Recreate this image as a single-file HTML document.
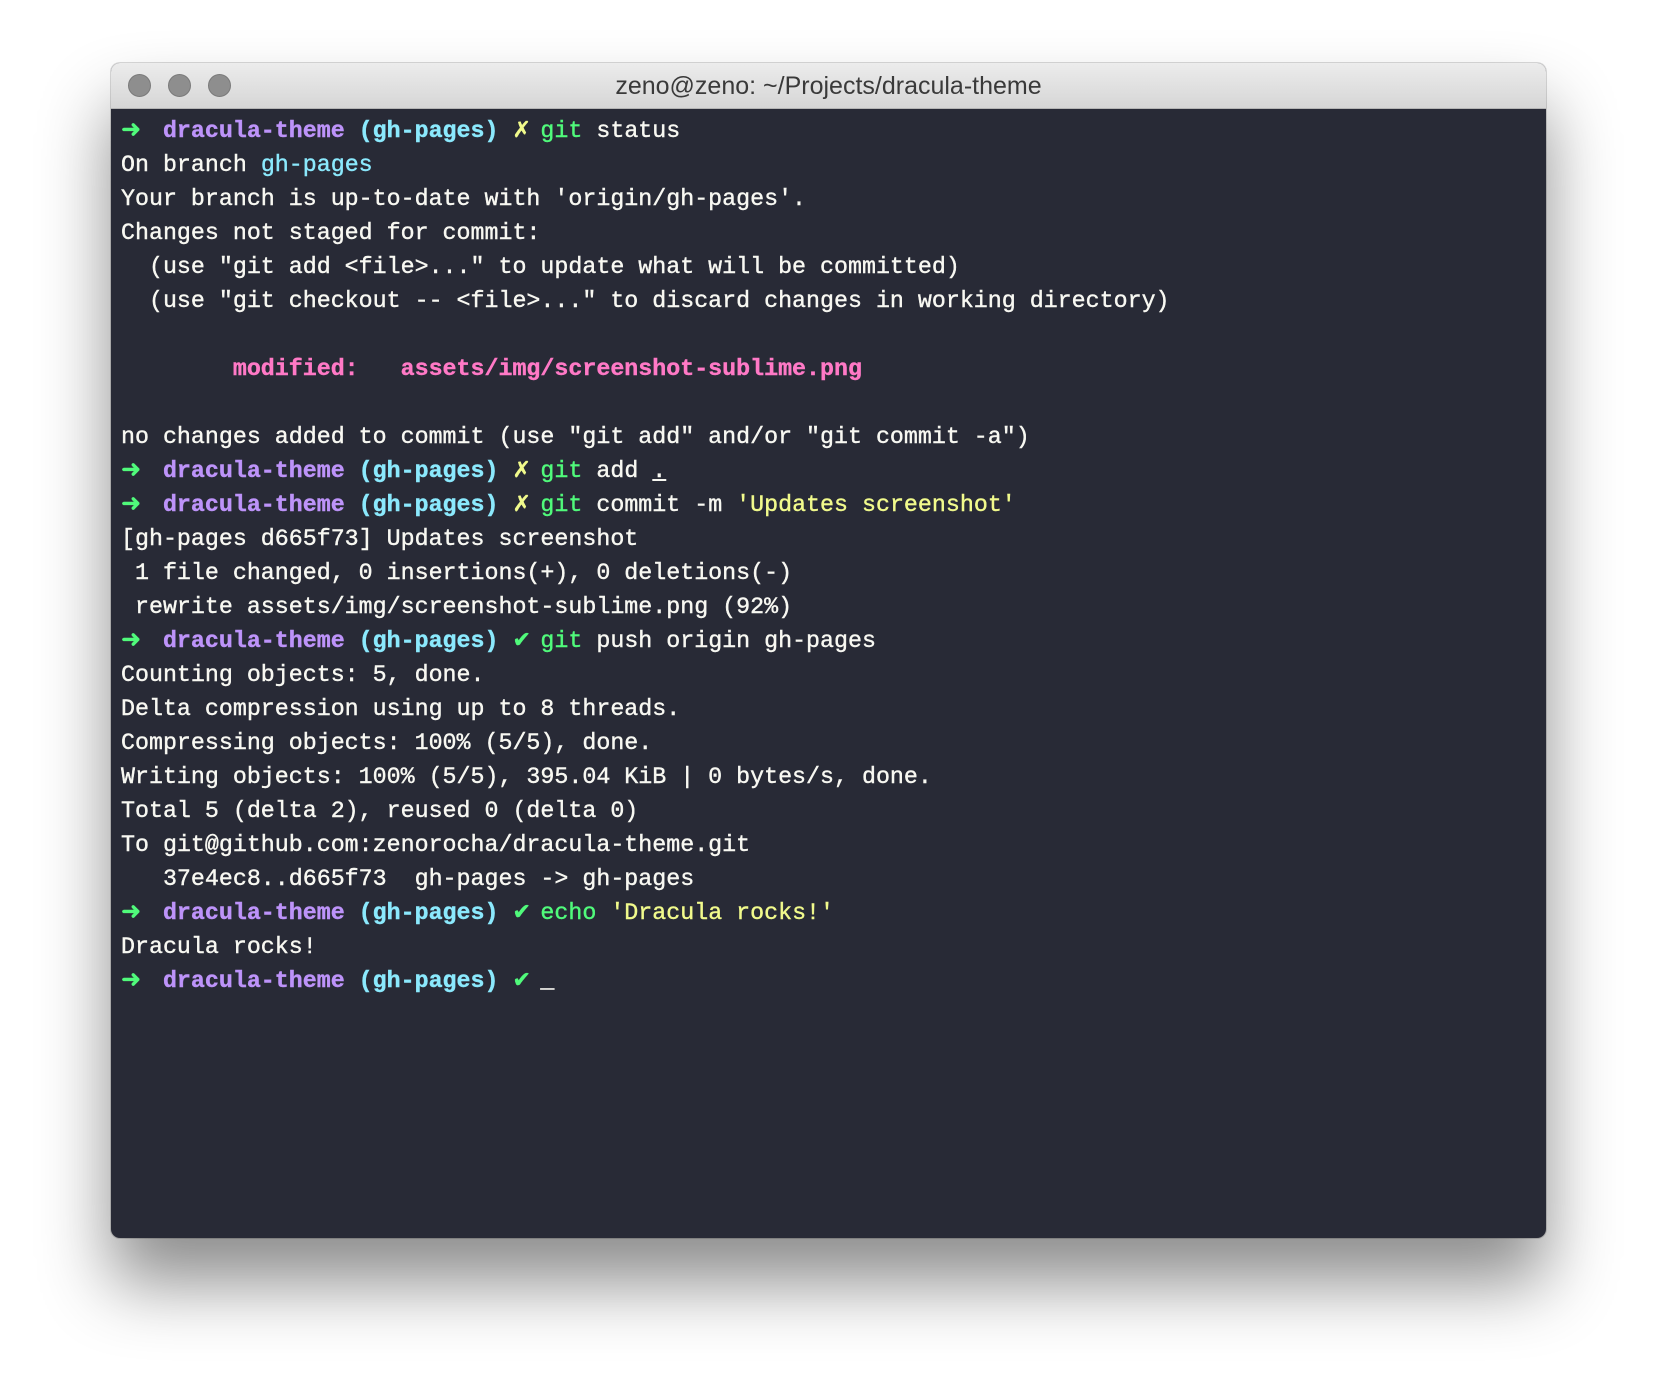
<!DOCTYPE html>
<html><head><meta charset="utf-8"><style>
html,body{margin:0;padding:0;background:#fff;width:1658px;height:1398px;overflow:hidden}
.win{position:absolute;left:111px;top:63px;width:1435px;height:1175px;border-radius:9px;background:#282a36;box-shadow:0 45px 70px rgba(0,0,0,.45),0 0 0 1px rgba(0,0,0,.15);overflow:hidden}
.tb{height:45px;background:linear-gradient(#ececec,#d6d6d6);border-bottom:1px solid #b5b5b5;position:relative;font-family:"Liberation Sans",sans-serif;font-size:25px;color:#3a3a3a;text-align:center;line-height:47px}
.dot{position:absolute;top:11px;width:23px;height:23px;border-radius:50%;background:#8e8e8e;border:1px solid #7a7a7a;box-sizing:border-box}
pre{margin:0;padding:5px 0 0 10px;font-family:"Liberation Mono",monospace;font-size:23.3px;line-height:34px;color:#f8f8f2;-webkit-text-stroke:0.4px currentColor}
.g{color:#50fa7b}.p{color:#bd93f9;font-weight:bold}.c{color:#8be9fd;font-weight:bold}.y{color:#f1fa8c}.k{color:#ff79c6;font-weight:bold}.cb{color:#8be9fd}
.ar,.sy{display:inline-block;width:1ch;overflow:visible;white-space:nowrap;text-align:left}
.ar>i,.sy>i{font-style:normal;font-family:"DejaVu Sans",sans-serif;font-weight:bold;font-size:24px;line-height:0}
.sy>i{font-size:22px}
</style></head><body>
<div class="win">
<div class="tb"><div class="dot" style="left:17px"></div><div class="dot" style="left:57px"></div><div class="dot" style="left:97px"></div>zeno@zeno: ~/Projects/dracula-theme</div>
<pre><span class="g ar"><i>➜</i></span>  <span class="p">dracula-theme</span> <span class="c">(gh-pages)</span> <span class="y sy"><i>✗</i></span> <span class="g">git</span> status
On branch <span class="cb">gh-pages</span>
Your branch is up-to-date with 'origin/gh-pages'.
Changes not staged for commit:
  (use "git add &lt;file&gt;..." to update what will be committed)
  (use "git checkout -- &lt;file&gt;..." to discard changes in working directory)

        <span class="k">modified:   assets/img/screenshot-sublime.png</span>

no changes added to commit (use "git add" and/or "git commit -a")
<span class="g ar"><i>➜</i></span>  <span class="p">dracula-theme</span> <span class="c">(gh-pages)</span> <span class="y sy"><i>✗</i></span> <span class="g">git</span> add <u>.</u>
<span class="g ar"><i>➜</i></span>  <span class="p">dracula-theme</span> <span class="c">(gh-pages)</span> <span class="y sy"><i>✗</i></span> <span class="g">git</span> commit -m <span class="y">'Updates screenshot'</span>
[gh-pages d665f73] Updates screenshot
 1 file changed, 0 insertions(+), 0 deletions(-)
 rewrite assets/img/screenshot-sublime.png (92%)
<span class="g ar"><i>➜</i></span>  <span class="p">dracula-theme</span> <span class="c">(gh-pages)</span> <span class="g sy"><i>✔</i></span> <span class="g">git</span> push origin gh-pages
Counting objects: 5, done.
Delta compression using up to 8 threads.
Compressing objects: 100% (5/5), done.
Writing objects: 100% (5/5), 395.04 KiB | 0 bytes/s, done.
Total 5 (delta 2), reused 0 (delta 0)
To git@github.com:zenorocha/dracula-theme.git
   37e4ec8..d665f73  gh-pages -&gt; gh-pages
<span class="g ar"><i>➜</i></span>  <span class="p">dracula-theme</span> <span class="c">(gh-pages)</span> <span class="g sy"><i>✔</i></span> <span class="g">echo</span> <span class="y">'Dracula rocks!'</span>
Dracula rocks!
<span class="g ar"><i>➜</i></span>  <span class="p">dracula-theme</span> <span class="c">(gh-pages)</span> <span class="g sy"><i>✔</i></span> _</pre>
</div>
</body></html>
